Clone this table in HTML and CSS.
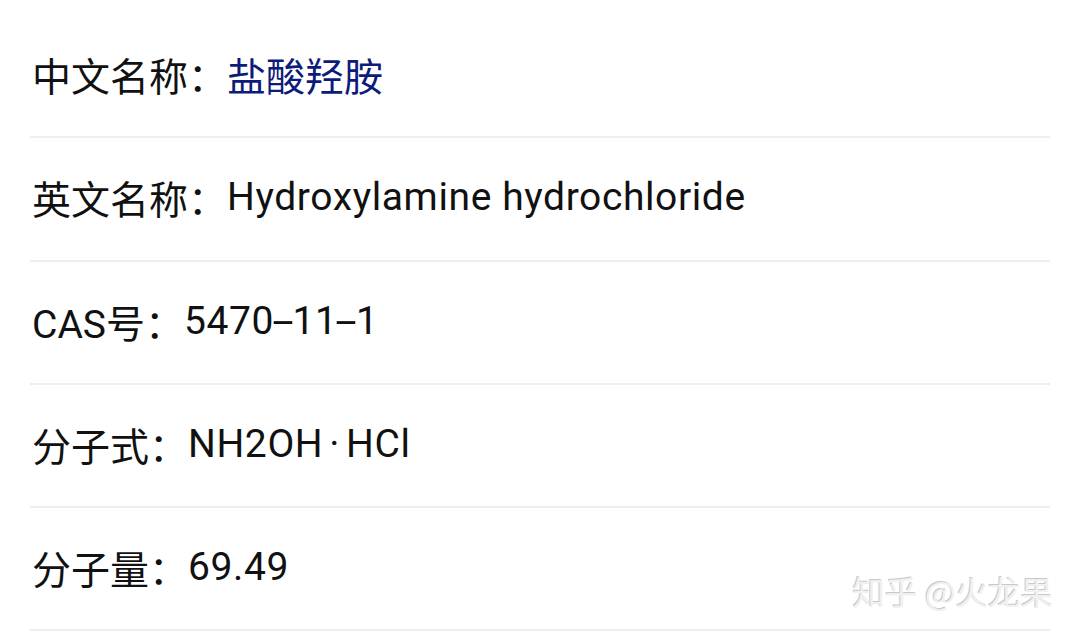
FILE: index.html
```html
<!DOCTYPE html>
<html lang="zh">
<head>
<meta charset="utf-8">
<link rel="stylesheet" href="styles.css">
</head>
<body>
<div class="page">
  <div class="row"><span class="label">中文名称：</span><span class="value blue">盐酸羟胺</span></div>
  <div class="row"><span class="label">英文名称：</span><span class="value latin">Hydroxylamine hydrochloride</span></div>
  <div class="row"><span class="label">CAS号：</span><span class="value latin">5470<span class="dash">-</span>11<span class="dash">-</span>1</span></div>
  <div class="row"><span class="label">分子式：</span><span class="value latin">NH2OH<span class="dot">·</span>HCl</span></div>
  <div class="row"><span class="label">分子量：</span><span class="value latin">69.49</span></div>
  <div class="watermark">知乎 @火龙果</div>
</div>
</body>
</html>
```
FILE: styles.css
```css
html, body {
  margin: 0;
  padding: 0;
  background: #ffffff;
}
.page {
  position: relative;
  width: 1080px;
  height: 638px;
  overflow: hidden;
  padding: 15px 30px 0 30px;
  box-sizing: border-box;
  font-family: Roboto, "Noto Sans CJK SC", sans-serif;
  color: #111111;
}
.row {
  height: 123.25px;
  box-sizing: border-box;
  padding-bottom: 3px;
  display: flex;
  align-items: center;
  border-bottom: 2px solid #eeeeee;
  font-size: 39px;
  white-space: nowrap;
}
.label {
  padding-left: 2px;
}
.latin {
  letter-spacing: 0.6px;
}
.dash {
  display: inline-block;
  transform: scaleX(2);
  margin: 0 3.5px;
}
.dot {
  margin: 0 6px;
}
.blue {
  color: #0d1b7a;
}
.watermark {
  position: absolute;
  right: 27px;
  bottom: 24px;
  font-family: "Noto Sans CJK SC", sans-serif;
  font-size: 32.5px;
  color: #f0f0f0;
  text-shadow: -1px -1px 0 #c8c8c8, 1px 1px 1px #ffffff;
}
```
